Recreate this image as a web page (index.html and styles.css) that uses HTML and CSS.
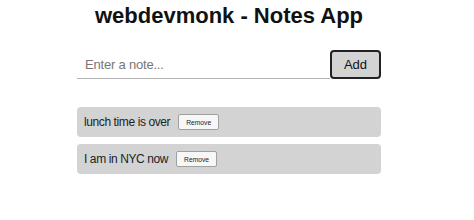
FILE: index.html
```html
<!DOCTYPE html>
<html lang="en">
<head>
  <meta charset="UTF-8">
  <meta name="viewport" content="width=device-width, initial-scale=1.0">
  <title>webdevmonk - Notes App</title>
  <link rel="stylesheet" href="styles.css">
</head>
<body>
  <div class="app">
    <h1>webdevmonk - Notes App</h1>

    <!-- note input -->
    <div class="note-form">
      <input type="text" class="note-input" placeholder="Enter a note...">
      <button class="add-button">Add</button>
    </div>

    <!-- notes list -->
    <div class="notes-list">
      <div class="note-item">
        <span class="note-text">lunch time is over</span>
        <button class="remove-button">Remove</button>
      </div>
      <div class="note-item">
        <span class="note-text">I am in NYC now</span>
        <button class="remove-button">Remove</button>
      </div>
    </div>
  </div>
</body>
</html>
```

FILE: styles.css
```css
/* base */
body {
  font-family: 'Liberation Sans', Arial, sans-serif;
  margin: 0;
  padding: 0 16px 0 0;
  background-color: #fff;
  color: #222;
}

.app {
  width: 304px;
  margin: 0 auto;
}

h1 {
  font-size: 22px;
  font-weight: bold;
  text-align: center;
  color: #111;
  margin: 3px -40px 0;
  white-space: nowrap;
}

.note-form {
  display: flex;
  margin-top: 21px;
  height: 29px;
}

.note-input {
  flex: 1;
  min-width: 0;
  border: none;
  border-bottom: 1px solid #b5b5b5;
  padding: 0 0 0 8px;
  font-family: inherit;
  font-size: 13px;
  letter-spacing: -0.2px;
  color: #222;
  outline: none;
  background: transparent;
}

.note-input::placeholder {
  color: #777;
}

.add-button {
  width: 51px;
  height: 29px;
  border: 2px solid #222;
  border-radius: 4px;
  background-color: #d3d3d3;
  font-family: inherit;
  font-size: 13px;
  color: #111;
  padding: 0;
}

.notes-list {
  margin-top: 28px;
}

.note-item {
  display: flex;
  align-items: center;
  height: 30px;
  padding: 0 7px;
  margin-bottom: 7px;
  background-color: #d3d3d3;
  border-radius: 4px;
}

.note-text {
  font-size: 12px;
  letter-spacing: -0.4px;
  color: #222;
}

.remove-button {
  margin-left: 8px;
  width: 41px;
  height: 16px;
  padding: 0;
  border: 1px solid #a0a0a0;
  border-radius: 2px;
  background-color: #f7f7f7;
  font-family: inherit;
  font-size: 6.7px;
  color: #222;
}
```
